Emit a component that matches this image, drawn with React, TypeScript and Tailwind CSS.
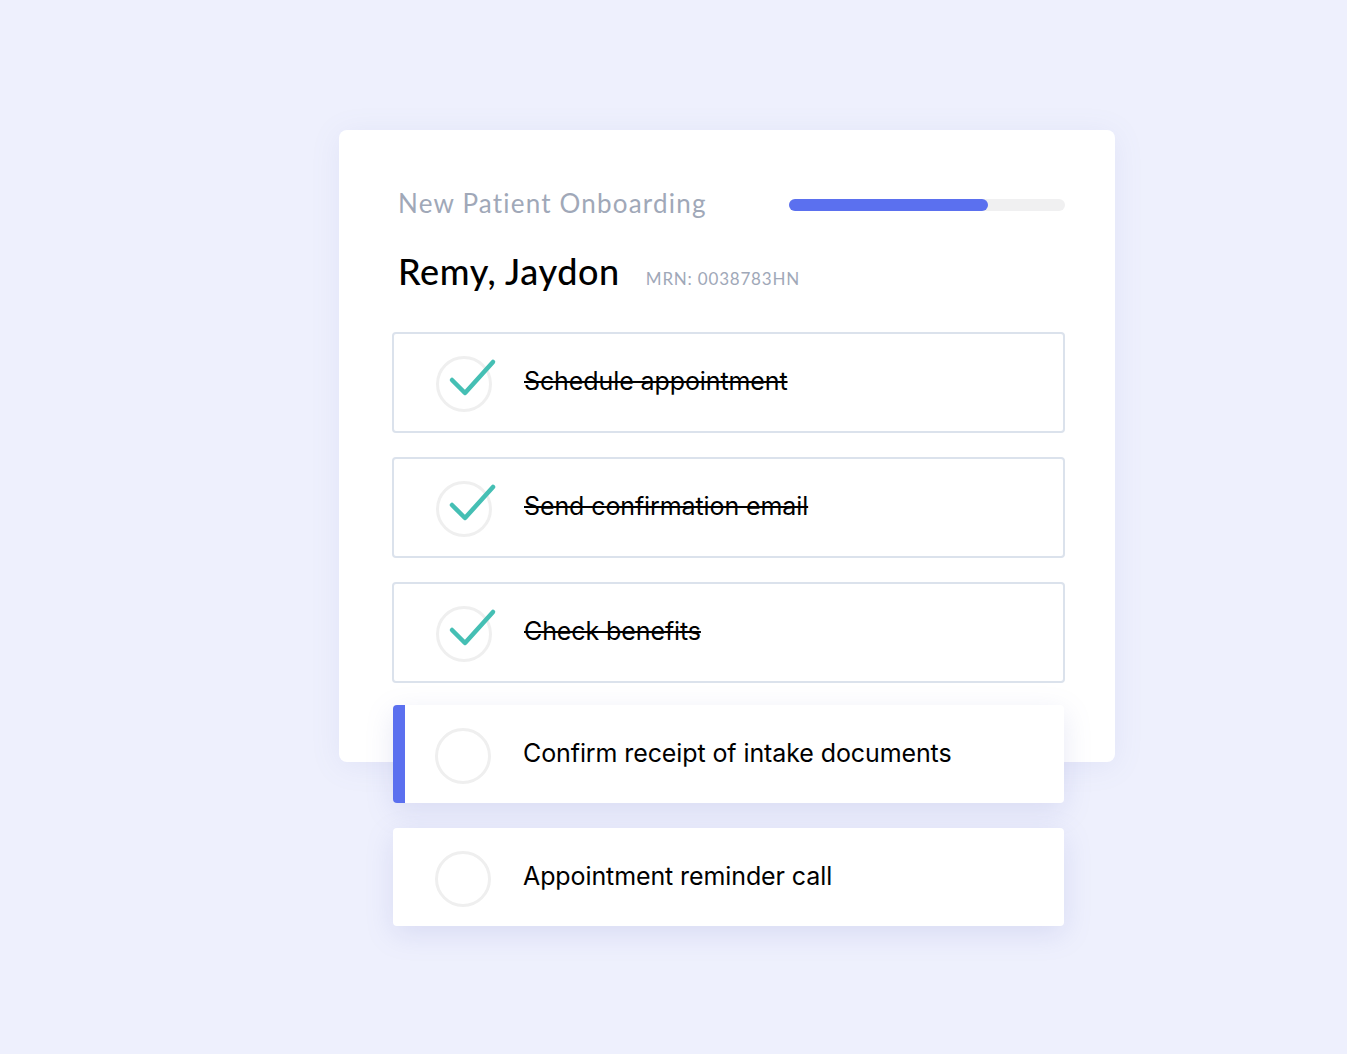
import { Fragment } from 'react';

type Task = { label: string; done: boolean; active?: boolean };

const doneTasks: Task[] = [
  { label: 'Schedule appointment', done: true },
  { label: 'Send confirmation email', done: true },
  { label: 'Check benefits', done: true },
];

const openTasks: Task[] = [
  { label: 'Confirm receipt of intake documents', done: false, active: true },
  { label: 'Appointment reminder call', done: false },
];

const StatusMark = ({ done }: { done: boolean }) => (
  <svg width="64" height="60" viewBox="0 0 64 60" className="shrink-0 -ml-[4px] overflow-visible">
    <circle cx="32" cy="32" r="26.5" fill="none" stroke="#efefef" strokeWidth="3" />
    {done && (
      <path
        d="M20 28 L33 41 L61 10"
        fill="none"
        stroke="#45bfb4"
        strokeWidth="4.5"
        strokeLinecap="round"
        strokeLinejoin="round"
      />
    )}
  </svg>
);

const TaskRow = ({ task, floating }: { task: Task; floating?: boolean }) => (
  <div
    className={
      floating
        ? 'relative flex items-center h-[98px] bg-white rounded-[4px] pl-[42px] shadow-[0_8px_28px_rgba(120,130,200,0.18)] overflow-hidden'
        : 'flex items-center h-[101px] bg-white border-2 border-[#dbe2ec] rounded-[4px] pl-[42px]'
    }
  >
    {task.active && <div className="absolute left-0 top-0 bottom-0 w-[12px] bg-[#5b70ef]" />}
    <StatusMark done={task.done} />
    <span
      className={
        'ml-[28px] text-[25px] text-black tracking-[-0.1px] ' +
        (task.done ? 'line-through decoration-[2px] decoration-black' : '')
      }
      style={{ fontFamily: 'Inter, "Liberation Sans", sans-serif' }}
    >
      {task.label}
    </span>
  </div>
);

export default function App() {
  return (
    <div className="min-h-[1054px] w-full bg-[#eef0fd] pt-[130px] pl-[339px]" style={{ fontFamily: 'Lato, sans-serif' }}>
      <div className="w-[776px]">
        <div className="bg-white rounded-[8px] h-[632px] pl-[53px] pr-[50px] pt-[57px] shadow-[0_4px_30px_rgba(120,130,200,0.10)]">
          <div className="flex items-center justify-between pl-[6px]">
            <h2 className="text-[26px] leading-[32px] text-[#a0a8b8] tracking-[1.2px]">New Patient Onboarding</h2>
            <div className="w-[276px] h-[12px] rounded-full bg-[#f0f0f1] mt-[3px]">
              <div className="h-full w-[199px] rounded-full bg-[#5b70ef]" />
            </div>
          </div>
          <div className="flex items-baseline pl-[6px] mt-[32px]">
            <span className="text-[36px] leading-[40px] text-black font-medium tracking-[0.6px]">Remy, Jaydon</span>
            <span className="ml-[26px] text-[17px] text-[#a0a8b8] tracking-[0.8px]">MRN: 0038783HN</span>
          </div>
          <div className="mt-[40px] flex flex-col gap-[24px]">
            {doneTasks.map((t) => (
              <Fragment key={t.label}>
                <TaskRow task={t} />
              </Fragment>
            ))}
          </div>
        </div>
        <div className="-mt-[57px] pl-[54px] pr-[51px] flex flex-col gap-[25px]">
          {openTasks.map((t) => (
            <TaskRow key={t.label} task={t} floating />
          ))}
        </div>
      </div>
    </div>
  );
}
